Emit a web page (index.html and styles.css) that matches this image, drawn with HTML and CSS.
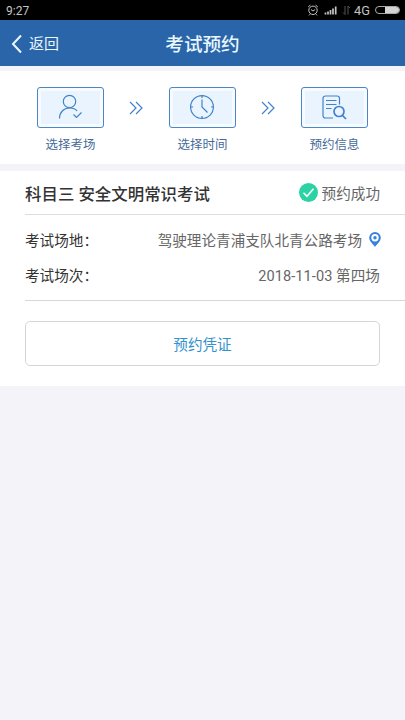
FILE: index.html
```
<!DOCTYPE html>
<html lang="zh-CN">
<head>
<meta charset="utf-8">
<title>考试预约</title>
<link rel="stylesheet" href="styles.css">
</head>
<body>
<div class="status">
  <span class="time">9:27</span>
  <svg class="status-icons" width="44" height="14" viewBox="0 0 44 14" fill="none">
    <circle cx="6" cy="7.3" r="4.2" stroke="#c4c4c4"/>
    <path d="M1.2 4 3.4 2M10.8 4 8.6 2M4 6.500 6 8l2.200-1.500M3 11.2l-1 1.2M9 11.2l1 1.2" stroke="#c4c4c4"/>
    <path d="M18.5 9.5v2M21 8.5v3M23.5 7v4.5M26 5.5v6M28.7 3.5v8" stroke="#c4c4c4" stroke-width="1.7"/>
    <path d="M38 3v8.5l-2-2M41 11.5V3l2 2" stroke="#555"/>
  </svg>
  <span class="network">4G</span>
  <span class="battery"><span class="charge"></span></span>
</div>
<header class="header">
  <a class="back"><svg width="12" height="20" viewBox="0 0 12 20" fill="none"><path d="M10 1.500 2 10l8 8.500" stroke="#e9f7ff" stroke-width="2"/></svg>返回</a>
  <h1>考试预约</h1>
</header>
<nav class="steps">
  <div class="step">
    <div class="tile"><svg width="26" height="26" viewBox="0 0 26 26"><circle cx="12.500" cy="7.500" r="6.200"/><path d="M2.500 24.500c0-6 4-10.500 10-10.500 3.500 0 6 1 7.600 3M16.500 20.500l3 3 5-5"/></svg></div>
    <span>选择考场</span>
  </div>
  <svg class="chevrons" width="14" height="14" viewBox="0 0 14 14"><path d="M1 1l6 6-6 6M7 1l6 6-6 6"/></svg>
  <div class="step">
    <div class="tile"><svg width="26" height="26" viewBox="0 0 26 26"><circle cx="13" cy="13" r="11.400"/><path d="M13 5.500V13l5.500 5.500M13 1.600v2.500M13 22v2.400M1.600 13h2.500M22 13h2.400"/></svg></div>
    <span>选择时间</span>
  </div>
  <svg class="chevrons" width="14" height="14" viewBox="0 0 14 14"><path d="M1 1l6 6-6 6M7 1l6 6-6 6"/></svg>
  <div class="step">
    <div class="tile"><svg width="26" height="26" viewBox="0 0 26 26"><path d="M12 24H4.500a2.500 2.500 0 0 1-2.500-2.500v-17A2.500 2.500 0 0 1 4.500 2h11.500a2.500 2.500 0 0 1 2.500 2.500v6M5 6.500h10.500M5 10.500h10.500M5 14.500h5.500"/><circle class="lens" cx="18" cy="17.500" r="5"/><path class="lens" d="M21.500 21.500l3.500 3.500"/></svg></div>
    <span>预约信息</span>
  </div>
</nav>
<main class="card">
  <div class="card-head">
    <h2>科目三 安全文明常识考试</h2>
    <div class="result"><svg width="19" height="19" viewBox="0 0 19 19" fill="none"><circle cx="9.500" cy="9.500" r="9.500" fill="#2bd2a3"/><path d="M4.500 9.700l3.500 3.600 6.500-7.500" stroke="#fff" stroke-width="1.600"/></svg>预约成功</div>
  </div>
  <dl class="details">
    <div class="row"><dt>考试场地：</dt><dd>驾驶理论青浦支队北青公路考场<svg class="pin" width="12" height="15" viewBox="0 0 12 15"><path fill="#3583dc" fill-rule="evenodd" d="M6 0a5.800 5.800 0 0 1 5.800 5.800C11.800 9.500 8 12 6 15 4 12 .2 9.500.2 5.800A5.800 5.800 0 0 1 6 0zm0 2a3.700 3.700 0 1 0 0 7.400A3.700 3.700 0 0 0 6 2z"/><circle cx="6" cy="5.700" r="1.700" fill="#3583dc"/></svg></dd></div>
    <div class="row"><dt>考试场次：</dt><dd class="session">2018-11-03 第四场</dd></div>
  </dl>
  <button class="voucher" type="button">预约凭证</button>
</main>
</body>
</html>
```
FILE: styles.css
```
* { box-sizing: border-box; }
body {
  margin: 0;
  min-height: 720px;
  background: #f3f3f9;
  color: #333;
  font-family: Roboto, "Noto Sans CJK SC", sans-serif;
  font-size: 14.6px;
}
h1, h2, dl, dd { margin: 0; }
svg { display: block; flex: none; }
.status {
  display: flex;
  align-items: center;
  height: 20px;
  padding: 1px 5px 0 6px;
  background: #000;
  color: #c4c4c4;
  font-size: 12px;
}
.status-icons { margin: 0 0 2px auto; }
.network { margin-left: 3px; font-size: 12.8px; }
.battery {
  display: flex;
  justify-content: flex-end;
  width: 25px;
  height: 8px;
  margin: 0 0 1px 5px;
  border: 1px solid #aaa;
  border-radius: 4px;
}
.charge { width: 14px; background: #d4d4d4; border-radius: 0 3px 3px 0; }
.header {
  display: grid;
  grid-template-columns: 1fr auto 1fr;
  align-items: center;
  height: 46px;
  padding: 1px 11px 0;
  background: #2b65a9;
  color: #e9f7ff;
}
.back { display: flex; align-items: center; gap: 6px; font-size: 15px; line-height: 22px; }
h1 { padding-top: 2px; font-size: 18.6px; line-height: 24px; font-weight: 500; }
.steps {
  display: flex;
  justify-content: space-between;
  height: 93px;
  margin-top: 5px;
  padding: 16px 37px 0;
  background: #fff;
}
.step { display: flex; flex-direction: column; align-items: center; width: 67px; color: #476b99; font-size: 12.5px; line-height: 18px; }
.tile {
  display: flex;
  align-items: center;
  justify-content: center;
  width: 67px;
  height: 41px;
  margin-bottom: 8px;
  padding: 0 1px 1px 0;
  border: 1px solid #4b87c6;
  border-radius: 3px;
  background: #e9f4ff;
  box-shadow: inset 0 0 0 3px #f7fbff;
}
.tile svg, .chevrons { fill: none; stroke: #4382c8; stroke-width: 1.2; }
.tile .lens { stroke-width: 1.7; }
.chevrons { margin: 14px 1px 0 -1px; }
.card { height: 215px; margin-top: 7px; padding-left: 25px; background: #fff; }
.card-head {
  display: flex;
  align-items: center;
  justify-content: space-between;
  height: 44px;
  padding-right: 25px;
  border-bottom: 1px solid #dedede;
}
h2 { font-size: 16.45px; font-weight: 500; }
.result { display: flex; align-items: center; gap: 4px; color: #666; }
.details { height: 86px; padding: 7px 25px 0 0; border-bottom: 1px solid #d8d8d8; }
.row { display: flex; align-items: center; justify-content: space-between; height: 35px; }
dd { display: flex; align-items: center; color: #666; }
.pin { margin: 0 -1px 1px 7px; }
.session { letter-spacing: 0.05px; }
.voucher {
  display: block;
  width: 355px;
  height: 45px;
  margin-top: 20px;
  padding: 0;
  border: 1px solid #d5d5d5;
  border-radius: 5px;
  background: #fff;
  color: #3392cc;
  font: inherit;
}
```
